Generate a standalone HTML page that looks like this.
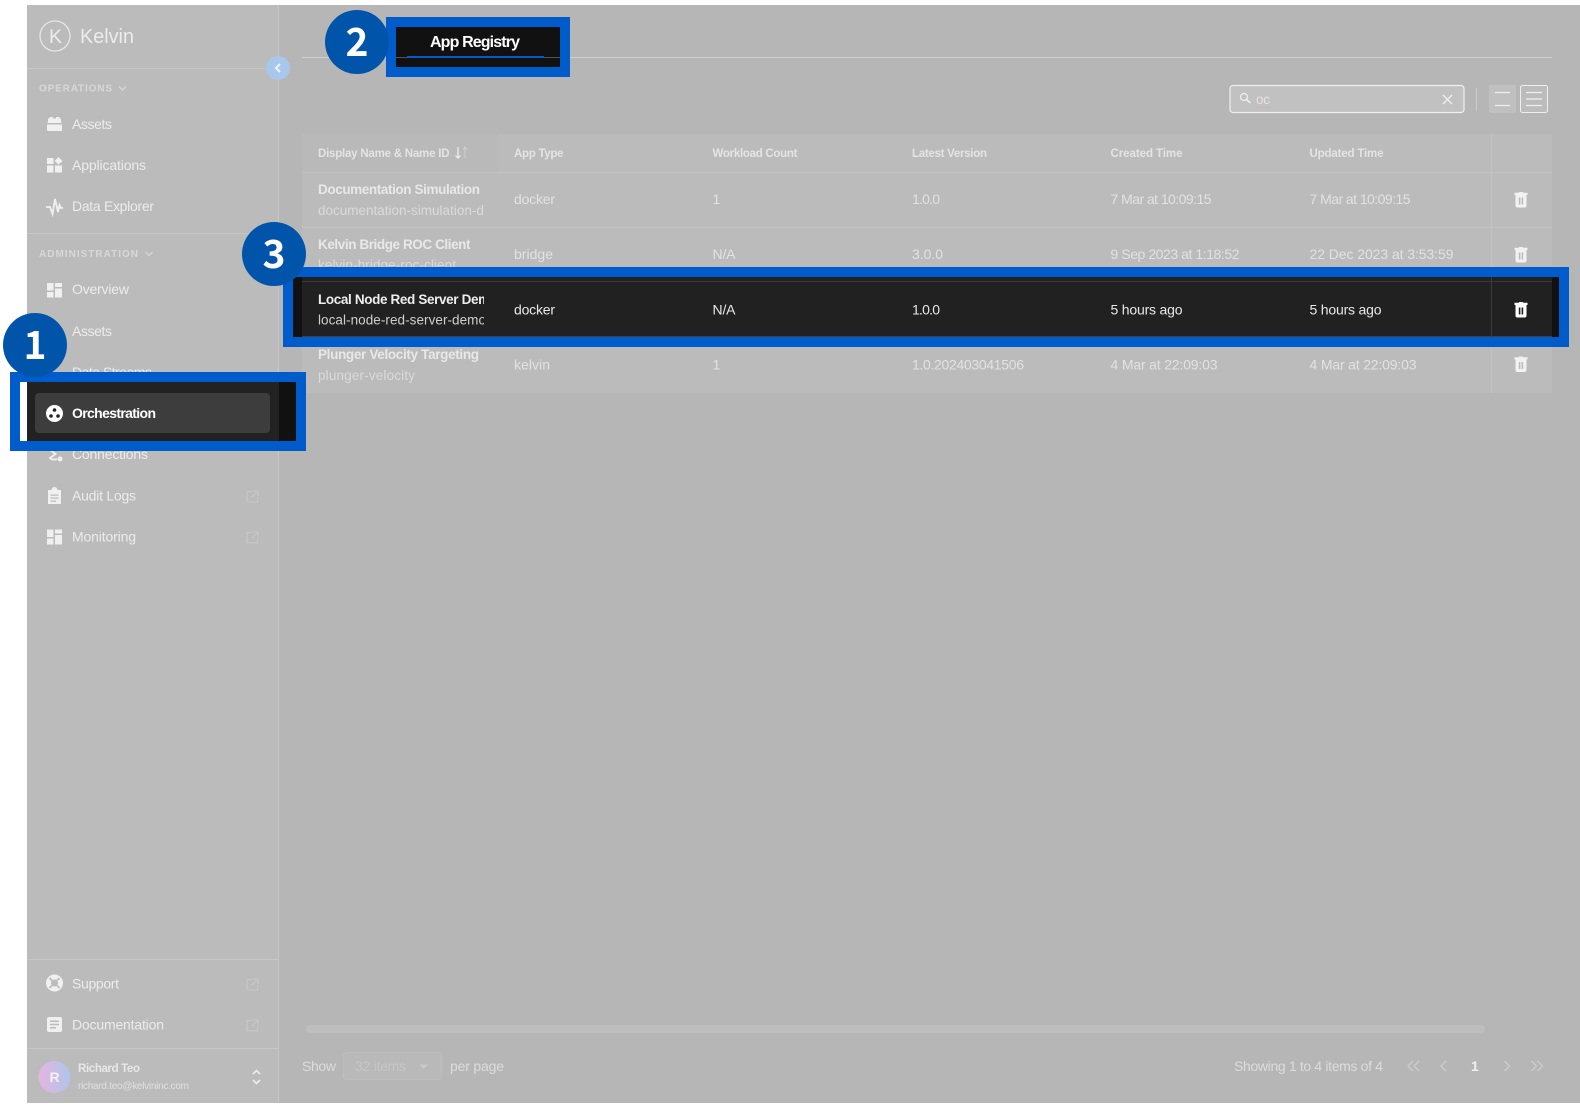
<!DOCTYPE html>
<html lang="en"><head><meta charset="utf-8"><title>App Registry</title>
<style>
html,body{margin:0;padding:0;background:#fff;width:1580px;height:1120px;overflow:hidden}
svg{display:block;font-family:"Liberation Sans",sans-serif}
text{white-space:pre}
.nav{font-size:14px;fill:#ececec}
.sec{font-size:10px;font-weight:700;fill:#d8d8d8}
.th{font-size:11.5px;font-weight:700;fill:#e4e4e4}
.td{font-size:14px;fill:#e2e2e2}
.nm{font-size:13.5px;font-weight:700;fill:#e8e8e8}
.sub{font-size:13.5px;fill:#dadada}
.dk{fill:#e8e8e8}
.ft{font-size:14px;fill:#dcdcdc}
.num{font-family:"Noto Sans CJK JP",sans-serif;font-size:39px;font-weight:700;fill:#fff;text-anchor:middle}
.ic{fill:#f0f0f0}
.ln{stroke:#c6c6c6;stroke-width:1;fill:none}
.ext{stroke:#c6c6c6;stroke-width:1.3;fill:none}
.tr{fill:#f2f2f2}
</style></head><body>
<svg width="1580" height="1120" viewBox="0 0 1580 1120" xmlns="http://www.w3.org/2000/svg">
<defs>
<clipPath id="nc"><rect x="302" y="172" width="182" height="221"/></clipPath>
<g id="ex"><path class="ext" d="M6 1.500H1.200V11.800H11.500V7M7 1H12V6M12 1L6 7"/></g>
<g id="tb"><path fill-rule="evenodd" d="M-6.500-7.300H-2.500L-1.500-8H1.500L2.500-7.300H6.500V-5H5.500V5.500Q5.500 7.500 3.500 7.500H-3.500Q-5.500 7.500-5.500 5.500V-5H-6.500ZM-2.200-2.500V4.500H-.6V-2.500ZM.6-2.500V4.500H2.200V-2.500Z"/></g>
<linearGradient id="av" x1="0" x2="1"><stop offset="0" stop-color="#e6b5df"/><stop offset="1" stop-color="#aec5ea"/></linearGradient>
</defs>

<!-- surfaces -->
<rect x="27" y="5" width="1553" height="1098" fill="#b6b6b6"/>
<rect x="27" y="5" width="252" height="1098" fill="#bbbbbb"/>
<path class="ln" d="M278.500 5V1103M27 68.500H279M27 233.500H279M27 959.500H279M27 1048.500H279"/>

<!-- logo -->
<circle cx="55" cy="36" r="15" fill="none" stroke="#e6e6e6" stroke-width="1.300"/>
<text x="49" y="43" font-size="19" fill="#eeeeee" textLength="13" lengthAdjust="spacingAndGlyphs">K</text>
<text x="80" y="43" font-size="20" fill="#ececec" textLength="54" lengthAdjust="spacingAndGlyphs">Kelvin</text>

<!-- toggle -->
<circle cx="278" cy="68" r="12" fill="#a9c6ec"/>
<path d="M280 64L276 68L280 72" fill="none" stroke="#f0f4fa" stroke-width="2"/>

<!-- sidebar sections -->
<text class="sec" x="39" y="91.500" textLength="73">OPERATIONS</text>
<path d="M119 86.500L122.500 90L126 86.500" fill="none" stroke="#d6d6d6" stroke-width="1.400"/>
<text class="sec" x="39" y="257" textLength="99">ADMINISTRATION</text>
<path d="M145.500 252L149 255.500L152.500 252" fill="none" stroke="#d6d6d6" stroke-width="1.400"/>

<!-- nav items -->
<path class="ic" d="M48 122.500V119Q48 118.500 48.500 118.500H49.500V117H53V118.500H56V117H59.500V118.500H60.500Q61 118.500 61 119V122.500H62V123H47V122.500ZM47 124.500H62V130Q62 131 61 131H48Q47 131 47 130Z"/>
<text class="nav" x="72" y="129" textLength="40">Assets</text>

<path class="ic" d="M47 158H53.500V164H47ZM47 165.500H53.500V172.500H47ZM55 165.500H62V172.500H55ZM58.500 157L62.500 161L58.500 164.500L54.500 161Z"/>
<text class="nav" x="72" y="170" textLength="74">Applications</text>

<path d="M46 207H50L52.500 214L55 199L58 212L59.500 205L61 208H63" fill="none" stroke="#f0f0f0" stroke-width="1.800"/>
<text class="nav" x="72" y="211" textLength="82">Data Explorer</text>

<path class="ic" d="M47 283H53.500V290.500H47ZM47 292H53.500V297.500H47ZM55 283H62V287H55ZM55 288.500H62V297.500H55Z"/>
<text class="nav" x="72" y="294" textLength="57">Overview</text>

<text class="nav" x="72" y="336" textLength="40">Assets</text>
<text class="nav" x="72" y="377" textLength="80">Data Streams</text>

<path d="M49.500 449.500L55.500 454L50 458Q52 460.500 57 459" fill="none" stroke="#f0f0f0" stroke-width="1.800"/>
<circle cx="60" cy="459" r="2.500" class="ic"/>
<text class="nav" x="72" y="459" textLength="76">Connections</text>

<path class="ic" fill-rule="evenodd" d="M48 490H51.500Q52 487 54.500 487Q57 487 57.500 490H61V504H48ZM50.500 494.500V495.800H58.500V494.500ZM50.500 497.500V498.800H58.500V497.500ZM50.500 500.500V501.800H56V500.500Z"/>
<text class="nav" x="72" y="500.500" textLength="64">Audit Logs</text>
<use href="#ex" x="246" y="490"/>

<path class="ic" d="M47 529.500H53.500V537H47ZM47 538.500H53.500V544.500H47ZM55 529.500H62V533.500H55ZM55 535H62V544.500H55Z"/>
<text class="nav" x="72" y="541.500" textLength="64">Monitoring</text>
<use href="#ex" x="246" y="531"/>

<circle cx="54.500" cy="983" r="6" fill="none" stroke="#f0f0f0" stroke-width="5"/>
<path d="M49.500 978L52 980.500M59.500 978L57 980.500M49.500 988L52 985.500M59.500 988L57 985.500" stroke="#bbbbbb" stroke-width="1.800"/>
<text class="nav" x="72" y="988.500" textLength="47">Support</text>
<use href="#ex" x="246" y="978"/>

<path class="ic" fill-rule="evenodd" d="M49 1017H60Q62 1017 62 1019V1030Q62 1032 60 1032H49Q47 1032 47 1030V1019Q47 1017 49 1017ZM50 1020.500V1022H59V1020.500ZM50 1023.800V1025.300H59V1023.800ZM50 1027V1028.500H56V1027Z"/>
<text class="nav" x="72" y="1029.500" textLength="92">Documentation</text>
<use href="#ex" x="246" y="1019"/>

<!-- user -->
<circle cx="54.500" cy="1077" r="16" fill="url(#av)"/>
<text x="49.500" y="1082" font-size="14" font-weight="700" fill="#f2f2f2">R</text>
<text x="78" y="1072" font-size="11.500" font-weight="700" fill="#e8e8e8" textLength="62">Richard Teo</text>
<text x="78" y="1089" font-size="10" fill="#e0e0e0" textLength="111">richard.teo@kelvininc.com</text>
<path d="M253 1074L256.500 1070.500L260 1074M253 1080L256.500 1083.500L260 1080" fill="none" stroke="#eeeeee" stroke-width="1.600"/>

<!-- tab line -->
<path d="M302 57.500H1552" stroke="#d0d0d0" stroke-width="1"/>

<!-- search -->
<rect x="1230" y="85.500" width="234" height="27" rx="3" fill="#c1c1c1" stroke="#efefef" stroke-width="1.200"/>
<circle cx="1244" cy="97" r="3.500" fill="none" stroke="#eeeeee" stroke-width="1.300"/>
<path d="M1246.500 99.500L1250.500 103" stroke="#eeeeee" stroke-width="1.500"/>
<text x="1256" y="104" font-size="13.500" fill="#e2e2e2" textLength="14">oc</text>
<path d="M1256 107.500H1270" stroke="#dba8a8" stroke-width="1" stroke-dasharray="1.500 1.500"/>
<path d="M1443 95L1452 104M1452 95L1443 104" stroke="#f0f0f0" stroke-width="1.300"/>
<path d="M1476.500 88V111" stroke="#cdcdcd"/>
<rect x="1489" y="85" width="27" height="28" rx="2" fill="#c0c0c0"/>
<path d="M1495 92.500H1510M1495 105.500H1510" stroke="#efefef" stroke-width="1.300"/>
<rect x="1520.500" y="85.500" width="27" height="27" rx="2" fill="#bcbcbc" stroke="#efefef" stroke-width="1"/>
<path d="M1526 92.500H1542M1526 99H1542M1526 105.500H1542" stroke="#efefef" stroke-width="1.300"/>

<!-- table -->
<rect x="302" y="134" width="1250" height="259" fill="#bbbbbb"/>
<rect x="302" y="134" width="196" height="38" fill="#b9b9b9"/>
<path d="M302 172.500H1552M302 227.500H1552M1491.500 134V393" stroke="#c2c2c2"/>

<text class="th" x="318" y="157" textLength="131.500">Display Name &amp; Name ID</text>
<path d="M458 147V158M455.500 155.500L458 158L460.500 155.500" fill="none" stroke="#f0f0f0" stroke-width="1.200"/>
<path d="M465 158V147M463 149.500L465 147L467 149.500" fill="none" stroke="#cfcfcf" stroke-width="1"/>
<text class="th" x="514" y="157" textLength="49.500">App Type</text>
<text class="th" x="712.500" y="157" textLength="85">Workload Count</text>
<text class="th" x="912" y="157" textLength="75">Latest Version</text>
<text class="th" x="1110.500" y="157" textLength="72">Created Time</text>
<text class="th" x="1309.500" y="157" textLength="74">Updated Time</text>

<g clip-path="url(#nc)">
<text class="nm" x="318" y="194" textLength="162">Documentation Simulation</text>
<text class="sub" x="318" y="215">documentation-simulation-demo</text>
<text class="nm" x="318" y="249" textLength="152.500">Kelvin Bridge ROC Client</text>
<text class="sub" x="318" y="269.500" textLength="138">kelvin-bridge-roc-client</text>
<text class="nm" x="318" y="359" textLength="161">Plunger Velocity Targeting</text>
<text class="sub" x="318" y="380" textLength="97">plunger-velocity</text>
</g>

<text class="td" x="514" y="204" textLength="41">docker</text>
<text class="td" x="712.500" y="204">1</text>
<text class="td" x="912" y="204" textLength="28">1.0.0</text>
<text class="td" x="1110.500" y="204" textLength="101">7 Mar at 10:09:15</text>
<text class="td" x="1309.500" y="204" textLength="101">7 Mar at 10:09:15</text>
<use href="#tb" x="1521" y="200" class="tr"/>

<text class="td" x="514" y="259" textLength="39">bridge</text>
<text class="td" x="712.500" y="259" textLength="23">N/A</text>
<text class="td" x="912" y="259" textLength="31">3.0.0</text>
<text class="td" x="1110.500" y="259" textLength="129">9 Sep 2023 at 1:18:52</text>
<text class="td" x="1309.500" y="259" textLength="144">22 Dec 2023 at 3:53:59</text>
<use href="#tb" x="1521" y="255" class="tr"/>

<text class="td" x="514" y="369.500" textLength="36">kelvin</text>
<text class="td" x="712.500" y="369.500">1</text>
<text class="td" x="912" y="369.500" textLength="112">1.0.202403041506</text>
<text class="td" x="1110.500" y="369.500" textLength="107">4 Mar at 22:09:03</text>
<text class="td" x="1309.500" y="369.500" textLength="107">4 Mar at 22:09:03</text>
<use href="#tb" x="1521" y="364.500" class="tr"/>

<!-- scrollbar and footer -->
<rect x="306" y="1025" width="1179" height="8" rx="4" fill="#bebebe"/>
<text class="ft" x="302" y="1071" textLength="34">Show</text>
<rect x="343.500" y="1052.500" width="98" height="27" rx="3" fill="#b9b9b9" stroke="#bdbdbd"/>
<text x="355" y="1071" font-size="14" fill="#c6c6c6" textLength="51">32 items</text>
<path d="M419 1064.500H428L423.500 1069Z" fill="#c8c8c8"/>
<text class="ft" x="450" y="1071" textLength="54">per page</text>
<text class="ft" x="1234" y="1071" textLength="149">Showing 1 to 4 items of 4</text>
<path d="M1413 1061L1408 1066L1413 1071M1419 1061L1414 1066L1419 1071M1446 1061L1441 1066L1446 1071M1504.500 1061L1509.500 1066L1504.500 1071M1531.500 1061L1536.500 1066L1531.500 1071M1537.500 1061L1542.500 1066L1537.500 1071" fill="none" stroke="#cdcdcd" stroke-width="1.300"/>
<text x="1471" y="1071" font-size="14" font-weight="700" fill="#f0f0f0">1</text>

<!-- callout 3: row -->
<rect x="283" y="267" width="1286" height="80" fill="#005bcb"/>
<rect x="293" y="277" width="1266" height="60" fill="#111111"/>
<rect x="302" y="277" width="1250" height="60" fill="#212121"/>
<path d="M302 281.500H1552" stroke="#383838"/>
<path d="M302 336.500H1552" stroke="#404040"/>
<path d="M1491.500 277V337" stroke="#3a3a3a"/>
<clipPath id="nd"><rect x="302" y="280" width="182" height="55"/></clipPath>
<g clip-path="url(#nd)">
<text x="318" y="304" font-size="13.500" font-weight="700" fill="#eeeeee" textLength="180">Local Node Red Server Demo</text>
<text x="318" y="324.500" font-size="13.500" fill="#cfcfcf" textLength="168">local-node-red-server-demo</text>
</g>
<text class="td dk" x="514" y="314.500" textLength="41">docker</text>
<text class="td dk" x="712.500" y="314.500" textLength="23">N/A</text>
<text class="td dk" x="912" y="314.500" textLength="28">1.0.0</text>
<text class="td dk" x="1110.500" y="314.500" textLength="72">5 hours ago</text>
<text class="td dk" x="1309.500" y="314.500" textLength="72">5 hours ago</text>
<use href="#tb" x="1521" y="310" fill="#ffffff"/>

<!-- callout 1: nav item -->
<rect x="10" y="372" width="296" height="79" fill="#005bcb"/>
<rect x="20" y="382" width="7" height="59" fill="#ffffff"/>
<rect x="27" y="382" width="252" height="59" fill="#222222"/>
<rect x="279" y="382" width="17" height="59" fill="#111111"/>
<rect x="35" y="393" width="235" height="40" rx="4" fill="#3d3d3d"/>
<circle cx="54.500" cy="413.500" r="8.500" fill="#ffffff"/>
<circle cx="54.500" cy="410" r="1.800" fill="#222"/><circle cx="51" cy="416" r="1.800" fill="#222"/><circle cx="58" cy="416" r="1.800" fill="#222"/>
<text x="72" y="418" font-size="14" font-weight="700" fill="#ffffff" textLength="84">Orchestration</text>

<!-- callout 2: tab -->
<rect x="386" y="17" width="184" height="60" fill="#005bcb"/>
<rect x="396" y="27" width="164" height="40" fill="#111111"/>
<path d="M396 57.500H560" stroke="#555"/>
<rect x="407" y="56" width="137" height="2" fill="#005bcb"/>
<text x="430" y="47" font-size="16" font-weight="700" fill="#ffffff" textLength="90">App Registry</text>

<!-- number badges -->
<circle cx="35" cy="345" r="32" fill="#0055ab"/>
<text class="num" x="35" y="359">1</text>
<circle cx="357" cy="42" r="32" fill="#0055ab"/>
<text class="num" x="357" y="56">2</text>
<circle cx="274" cy="254" r="32" fill="#0055ab"/>
<text class="num" x="274" y="268">3</text>
</svg>
</body></html>
